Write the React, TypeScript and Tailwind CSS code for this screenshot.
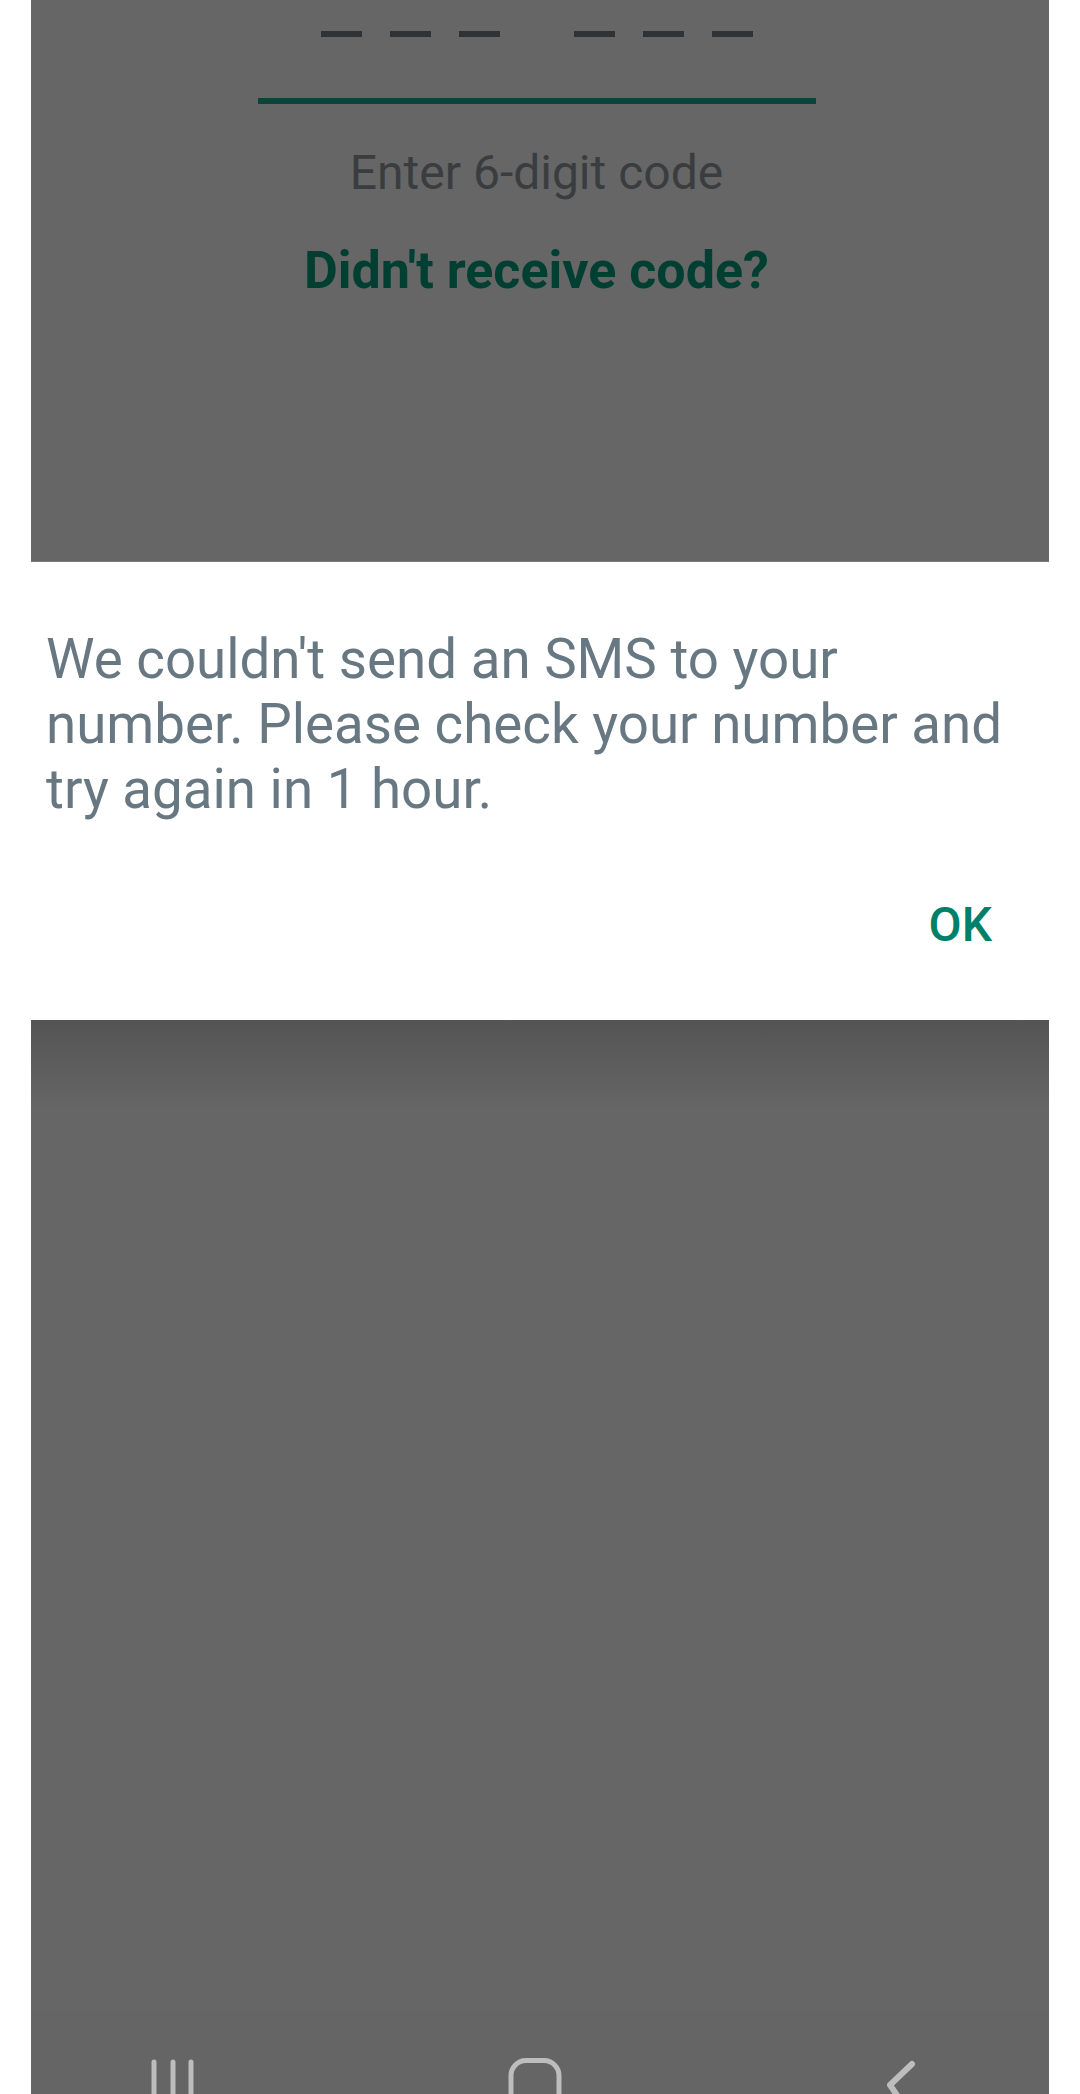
import React from 'react'

// one group of three placeholder dashes for the code field
function DashGroup() {
    return (
        <div className="flex gap-[28px]">
            {[0, 1, 2].map((i) => (
                <span key={i} className="block w-[41px] h-[6px] bg-[#303336]" />
            ))}
        </div>
    )
}

function RecentsIcon() {
    return (
        <svg width="50" height="40" viewBox="0 0 50 40" className="block">
            <g stroke="#bdbdbd" strokeWidth="5" strokeLinecap="round">
                <line x1="5" y1="4" x2="5" y2="60" />
                <line x1="24" y1="4" x2="24" y2="60" />
                <line x1="42" y1="4" x2="42" y2="60" />
            </g>
        </svg>
    )
}

function HomeIcon() {
    return (
        <svg width="56" height="40" viewBox="0 0 56 40" className="block">
            <rect x="3" y="2.5" width="48" height="80" rx="15" fill="none" stroke="#bdbdbd" strokeWidth="5" />
        </svg>
    )
}

function BackIcon() {
    return (
        <svg width="40" height="40" viewBox="0 0 40 40" className="block">
            <polyline
                points="27,6 5,27 22,52"
                fill="none"
                stroke="#bdbdbd"
                strokeWidth="6"
                strokeLinecap="round"
                strokeLinejoin="round"
            />
        </svg>
    )
}

export default function App() {
    return (
        <div className="w-[1080px] h-[2094px] overflow-hidden bg-white flex flex-col font-[Roboto,sans-serif]">
            {/* verification screen behind the scrim */}
            <div className="mx-[31px] h-[562px] bg-[#666666] border-b border-[#7c7c7c] flex flex-col items-center pt-[31px] pr-[7px]">
                <div className="flex gap-[74px]">
                    <DashGroup />
                    <DashGroup />
                </div>
                <div className="mt-[61px] w-[558px] h-[6px] bg-[#07473a]" />
                <p className="mt-[42px] text-[48px] leading-[54px] text-[#3a3d40]">Enter 6-digit code</p>
                <p className="mt-[43px] text-[52px] leading-[56px] font-bold text-[#003f31]">Didn't receive code?</p>
            </div>

            {/* alert dialog */}
            <div className="h-[458px] bg-white flex flex-col pt-[65px]">
                <p className="pl-[46px] pr-[36px] text-[54.7px] leading-[65px] text-[#687882]">
                    We couldn't send an SMS to your number. Please check your number and try again in 1 hour.
                </p>
                <div className="mt-[76px] flex justify-end pr-[88px]">
                    <button className="text-[48px] leading-[54px] font-medium text-[#008069]">OK</button>
                </div>
            </div>

            {/* scrim below the dialog with system nav bar */}
            <div className="mx-[31px] flex-1 bg-[#666666] flex flex-col">
                <div className="h-[90px] bg-gradient-to-b from-[#545454] to-[#666666]" />
                <div className="flex-1" />
                <div className="h-[84px] bg-[#656565] flex items-start pt-[48px]">
                    <div className="ml-[118px]">
                        <RecentsIcon />
                    </div>
                    <div className="ml-[309px]">
                        <HomeIcon />
                    </div>
                    <div className="ml-[321px]">
                        <BackIcon />
                    </div>
                </div>
            </div>
        </div>
    )
}
